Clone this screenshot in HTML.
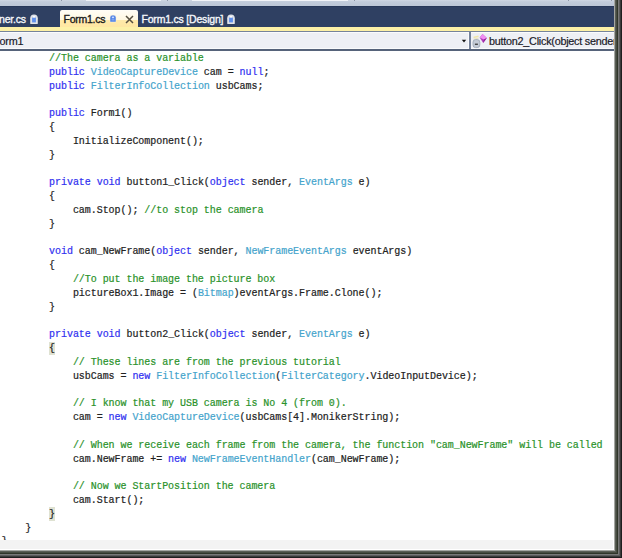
<!DOCTYPE html>
<html><head><meta charset="utf-8">
<style>
html,body{margin:0;padding:0;}
body{width:622px;height:558px;overflow:hidden;position:relative;background:#fff;font-family:"Liberation Sans",sans-serif;}
.abs{position:absolute;}
#topstrip{left:0;top:0;width:614px;height:5.5px;background:linear-gradient(#d0d8e4,#c2ccdb 30%,#bdc7d7);}
#tabbar{left:0;top:5.5px;width:614px;height:21.8px;background:linear-gradient(#1f2f50 0,#2f4062 1px,#2f4062 20.6px,#1b2a4c 20.8px);}
#yellow{left:0;top:27.2px;width:614px;height:3.8px;background:#fdf1a6;}
#ddbar{left:0;top:31px;width:614px;height:18.1px;background:linear-gradient(#76849b 0,#76849b 1.4px,#fbfcfd 1.4px,#fbfcfd 2.3px,#eef0f5 2.3px,#eef0f5 16.7px,#fafbfc 16.9px,#fafbfc 18.1px);}
#ddline{left:0;top:49.1px;width:614px;height:1.6px;background:#56637a;}
.tab{color:#f4f6fa;font-size:10.5px;white-space:nowrap;-webkit-text-stroke:0.35px currentColor;}
#acttab{left:60.3px;top:10.3px;width:77.4px;height:17.2px;background:linear-gradient(#fffdf6 0,#fff8e2 57%,#ffeaaa 58%,#ffe7a2 100%);border-radius:2px 2px 0 0;}
.ln{position:absolute;white-space:pre;font-family:"Liberation Mono",monospace;font-size:10px;line-height:12px;color:#222;letter-spacing:-0.05px;-webkit-text-stroke:0.2px currentColor;}
.kw{color:#3030f0;}
.ty{color:#44a4cc;}
.cm{color:#2a922a;}
.hl{}
.hlb{position:absolute;width:6.5px;height:13.5px;background:#dfe2d2;}
#hscroll{left:0;top:539.7px;width:613px;height:9.1px;background:#f3f3f3;}
#frame{left:-20px;top:-20px;width:634px;height:570px;box-shadow:0 0 0 1px #a4a6a2,0 0 0 2px #5a5e56,0 0 0 3px #474c42,0 0 0 4px #30362a,0 0 0 5px #787878,0 0 0 6px #5c5c5c,0 0 0 7px #3a3a3a,0 0 0 8px #1f1f1f;}
</style></head><body>
<div class="abs" id="topstrip"></div>
<div class="abs" style="left:86px;top:0;width:75px;height:1.3px;background:#eef1f6;"></div>
<div class="abs" style="left:191.5px;top:0;width:156.5px;height:1.3px;background:#f2f4f8;"></div>
<div class="abs" style="left:60.5px;top:0;width:1px;height:1.2px;background:#8d97a8;"></div>
<div class="abs" style="left:166.5px;top:0;width:1px;height:1.2px;background:#8d97a8;"></div>
<div class="abs" style="left:353.5px;top:0;width:1px;height:1.2px;background:#8d97a8;"></div>
<div class="abs" style="left:567.5px;top:0;width:1px;height:1.2px;background:#8d97a8;"></div>
<div class="abs" style="left:610.5px;top:0;width:1px;height:1.2px;background:#8d97a8;"></div>
<div class="abs" id="tabbar"></div>
<div class="abs" id="yellow"></div>
<div class="abs" id="acttab"></div>
<div class="abs tab" style="left:-1px;top:13.3px;letter-spacing:-0.2px;">ner.cs</div>
<svg class="abs" style="left:29px;top:13px;" width="10" height="12" viewBox="0 0 10 12">
 <path d="M1.2 10.6 V5.2 Q1.2 1.4 5 1.4 Q8.8 1.4 8.8 5.2 V10.6 Q8.8 11 8.4 11 H1.6 Q1.2 11 1.2 10.6 Z" fill="#dfe2e8"/>
 <rect x="3.1" y="4.6" width="3.8" height="4.8" fill="#5f90ec"/>
 <rect x="4" y="3.2" width="2" height="1.2" fill="#ffffff"/>
</svg>
<div class="abs tab" style="left:63.5px;top:13.3px;color:#1b1b1b;letter-spacing:-0.25px;">Form1.cs</div>
<svg class="abs" style="left:108.5px;top:14px;" width="8" height="9" viewBox="0 0 8 9">
 <path d="M1 8 V3.6 Q1 1.1 4 1.1 Q7 1.1 7 3.6 V8 Z" fill="#5283e6" stroke="#f6f1dc" stroke-width="0.5"/>
 <rect x="2.9" y="2.6" width="2.2" height="1.6" fill="#c9dcff"/>
 <rect x="2.6" y="5.4" width="2.8" height="0.9" fill="#9ab8f6"/>
</svg>
<svg class="abs" style="left:124.5px;top:15px;" width="9" height="9" viewBox="0 0 9 9">
 <path d="M1 1 L8 8 M8 1 L1 8" stroke="#575040" stroke-width="1.5"/>
</svg>
<div class="abs tab" style="left:141.5px;top:13.3px;letter-spacing:-0.2px;">Form1.cs [Design]</div>
<svg class="abs" style="left:225.5px;top:13px;" width="10" height="12" viewBox="0 0 10 12">
 <path d="M1.2 10.6 V5.2 Q1.2 1.4 5 1.4 Q8.8 1.4 8.8 5.2 V10.6 Q8.8 11 8.4 11 H1.6 Q1.2 11 1.2 10.6 Z" fill="#dfe2e8"/>
 <rect x="3.1" y="4.6" width="3.8" height="4.8" fill="#5f90ec"/>
 <rect x="4" y="3.2" width="2" height="1.2" fill="#ffffff"/>
</svg>
<div class="abs" id="ddbar"></div>
<div class="abs" style="left:469px;top:31px;width:2px;height:19px;background:#75829a;"></div>
<div class="abs" style="left:467.5px;top:33px;width:1px;height:15px;background:#fafbfc;"></div>
<div class="abs" id="ddline"></div>
<svg class="abs" style="left:461px;top:39px;" width="6" height="5" viewBox="0 0 6 5"><path d="M0.8 0.8 H5.2 L3 3.6 Z" fill="#111"/></svg>
<div class="abs" style="left:-0.5px;top:35.1px;font-size:10.8px;color:#1a1a28;letter-spacing:-0.2px;-webkit-text-stroke:0.2px currentColor;">orm1</div>
<svg class="abs" style="left:470px;top:31px;" width="20" height="18" viewBox="0 0 20 18">
 <path d="M3.5 6.5 L8.5 5.2" stroke="#f0e6a8" stroke-width="1.6"/>
 <path d="M3.5 8.2 L8.5 7.2" stroke="#e9e4bf" stroke-width="1"/>
 <rect x="3" y="8.6" width="6.8" height="8" rx="2.6" fill="#c3cad6" stroke="#9aa4b4" stroke-width="0.8"/>
 <rect x="4.9" y="12.6" width="3" height="1.3" fill="#3a3a3a"/>
 <path d="M9.7 6.5 L12.6 2.9 L16.8 7.1 L13.2 11.9 Z" fill="#b43cc0"/>
 <path d="M9.7 6.5 L12.6 2.9 L16.8 7.1 L13.8 8.6 Z" fill="#f08ff2"/>
 <path d="M16.8 7.1 L13.2 11.9 L13.8 8.6 Z" fill="#8f2598"/>
</svg>
<div class="abs" style="left:489px;top:35.1px;font-size:10.8px;color:#1a1a28;white-space:nowrap;letter-spacing:-0.24px;-webkit-text-stroke:0.2px currentColor;">button2_Click(object sender</div>
<div class="ln" style="top:53.19px;left:49.10px"><span class="cm">//The camera as a variable</span></div>
<div class="ln" style="top:67.00px;left:49.10px"><span class="kw">public</span> <span class="ty">VideoCaptureDevice</span> cam = <span class="kw">null</span>;</div>
<div class="ln" style="top:80.80px;left:49.10px"><span class="kw">public</span> <span class="ty">FilterInfoCollection</span> usbCams;</div>
<div class="ln" style="top:108.41px;left:49.10px"><span class="kw">public</span> Form1()</div>
<div class="ln" style="top:122.22px;left:49.10px">{</div>
<div class="ln" style="top:136.03px;left:72.90px">InitializeComponent();</div>
<div class="ln" style="top:149.83px;left:49.10px">}</div>
<div class="ln" style="top:177.44px;left:49.10px"><span class="kw">private</span> <span class="kw">void</span> button1_Click(<span class="kw">object</span> sender, <span class="ty">EventArgs</span> e)</div>
<div class="ln" style="top:191.25px;left:49.10px">{</div>
<div class="ln" style="top:205.06px;left:72.90px">cam.Stop(); <span class="cm">//to stop the camera</span></div>
<div class="ln" style="top:218.86px;left:49.10px">}</div>
<div class="ln" style="top:246.47px;left:49.10px"><span class="kw">void</span> cam_NewFrame(<span class="kw">object</span> sender, <span class="ty">NewFrameEventArgs</span> eventArgs)</div>
<div class="ln" style="top:260.28px;left:49.10px">{</div>
<div class="ln" style="top:274.09px;left:72.90px"><span class="cm">//To put the image the picture box</span></div>
<div class="ln" style="top:287.89px;left:72.90px">pictureBox1.Image = (<span class="ty">Bitmap</span>)eventArgs.Frame.Clone();</div>
<div class="ln" style="top:301.70px;left:49.10px">}</div>
<div class="ln" style="top:329.31px;left:49.10px"><span class="kw">private</span> <span class="kw">void</span> button2_Click(<span class="kw">object</span> sender, <span class="ty">EventArgs</span> e)</div>
<div class="hlb" style="top:341.62px;left:48.80px"></div>
<div class="ln" style="top:343.12px;left:49.10px"><span class="hl">{</span></div>
<div class="ln" style="top:356.92px;left:72.90px"><span class="cm">// These lines are from the previous tutorial</span></div>
<div class="ln" style="top:370.73px;left:72.90px">usbCams = <span class="kw">new</span> <span class="ty">FilterInfoCollection</span>(<span class="ty">FilterCategory</span>.VideoInputDevice);</div>
<div class="ln" style="top:398.34px;left:72.90px"><span class="cm">// I know that my USB camera is No 4 (from 0).</span></div>
<div class="ln" style="top:412.15px;left:72.90px">cam = <span class="kw">new</span> <span class="ty">VideoCaptureDevice</span>(usbCams[4].MonikerString);</div>
<div class="ln" style="top:439.76px;left:72.90px"><span class="cm">// When we receive each frame from the camera, the function &quot;cam_NewFrame&quot; will be called</span></div>
<div class="ln" style="top:453.56px;left:72.90px">cam.NewFrame += <span class="kw">new</span> <span class="ty">NewFrameEventHandler</span>(cam_NewFrame);</div>
<div class="ln" style="top:481.18px;left:72.90px"><span class="cm">// Now we StartPosition the camera</span></div>
<div class="ln" style="top:494.98px;left:72.90px">cam.Start();</div>
<div class="hlb" style="top:507.29px;left:48.80px"></div>
<div class="ln" style="top:508.79px;left:49.10px"><span class="hl">}</span></div>
<div class="ln" style="top:522.59px;left:25.30px">}</div>
<div class="ln" style="top:536.40px;left:1.50px">}</div>
<div class="abs" id="hscroll"></div>
<div class="abs" id="frame"></div>
</body></html>
